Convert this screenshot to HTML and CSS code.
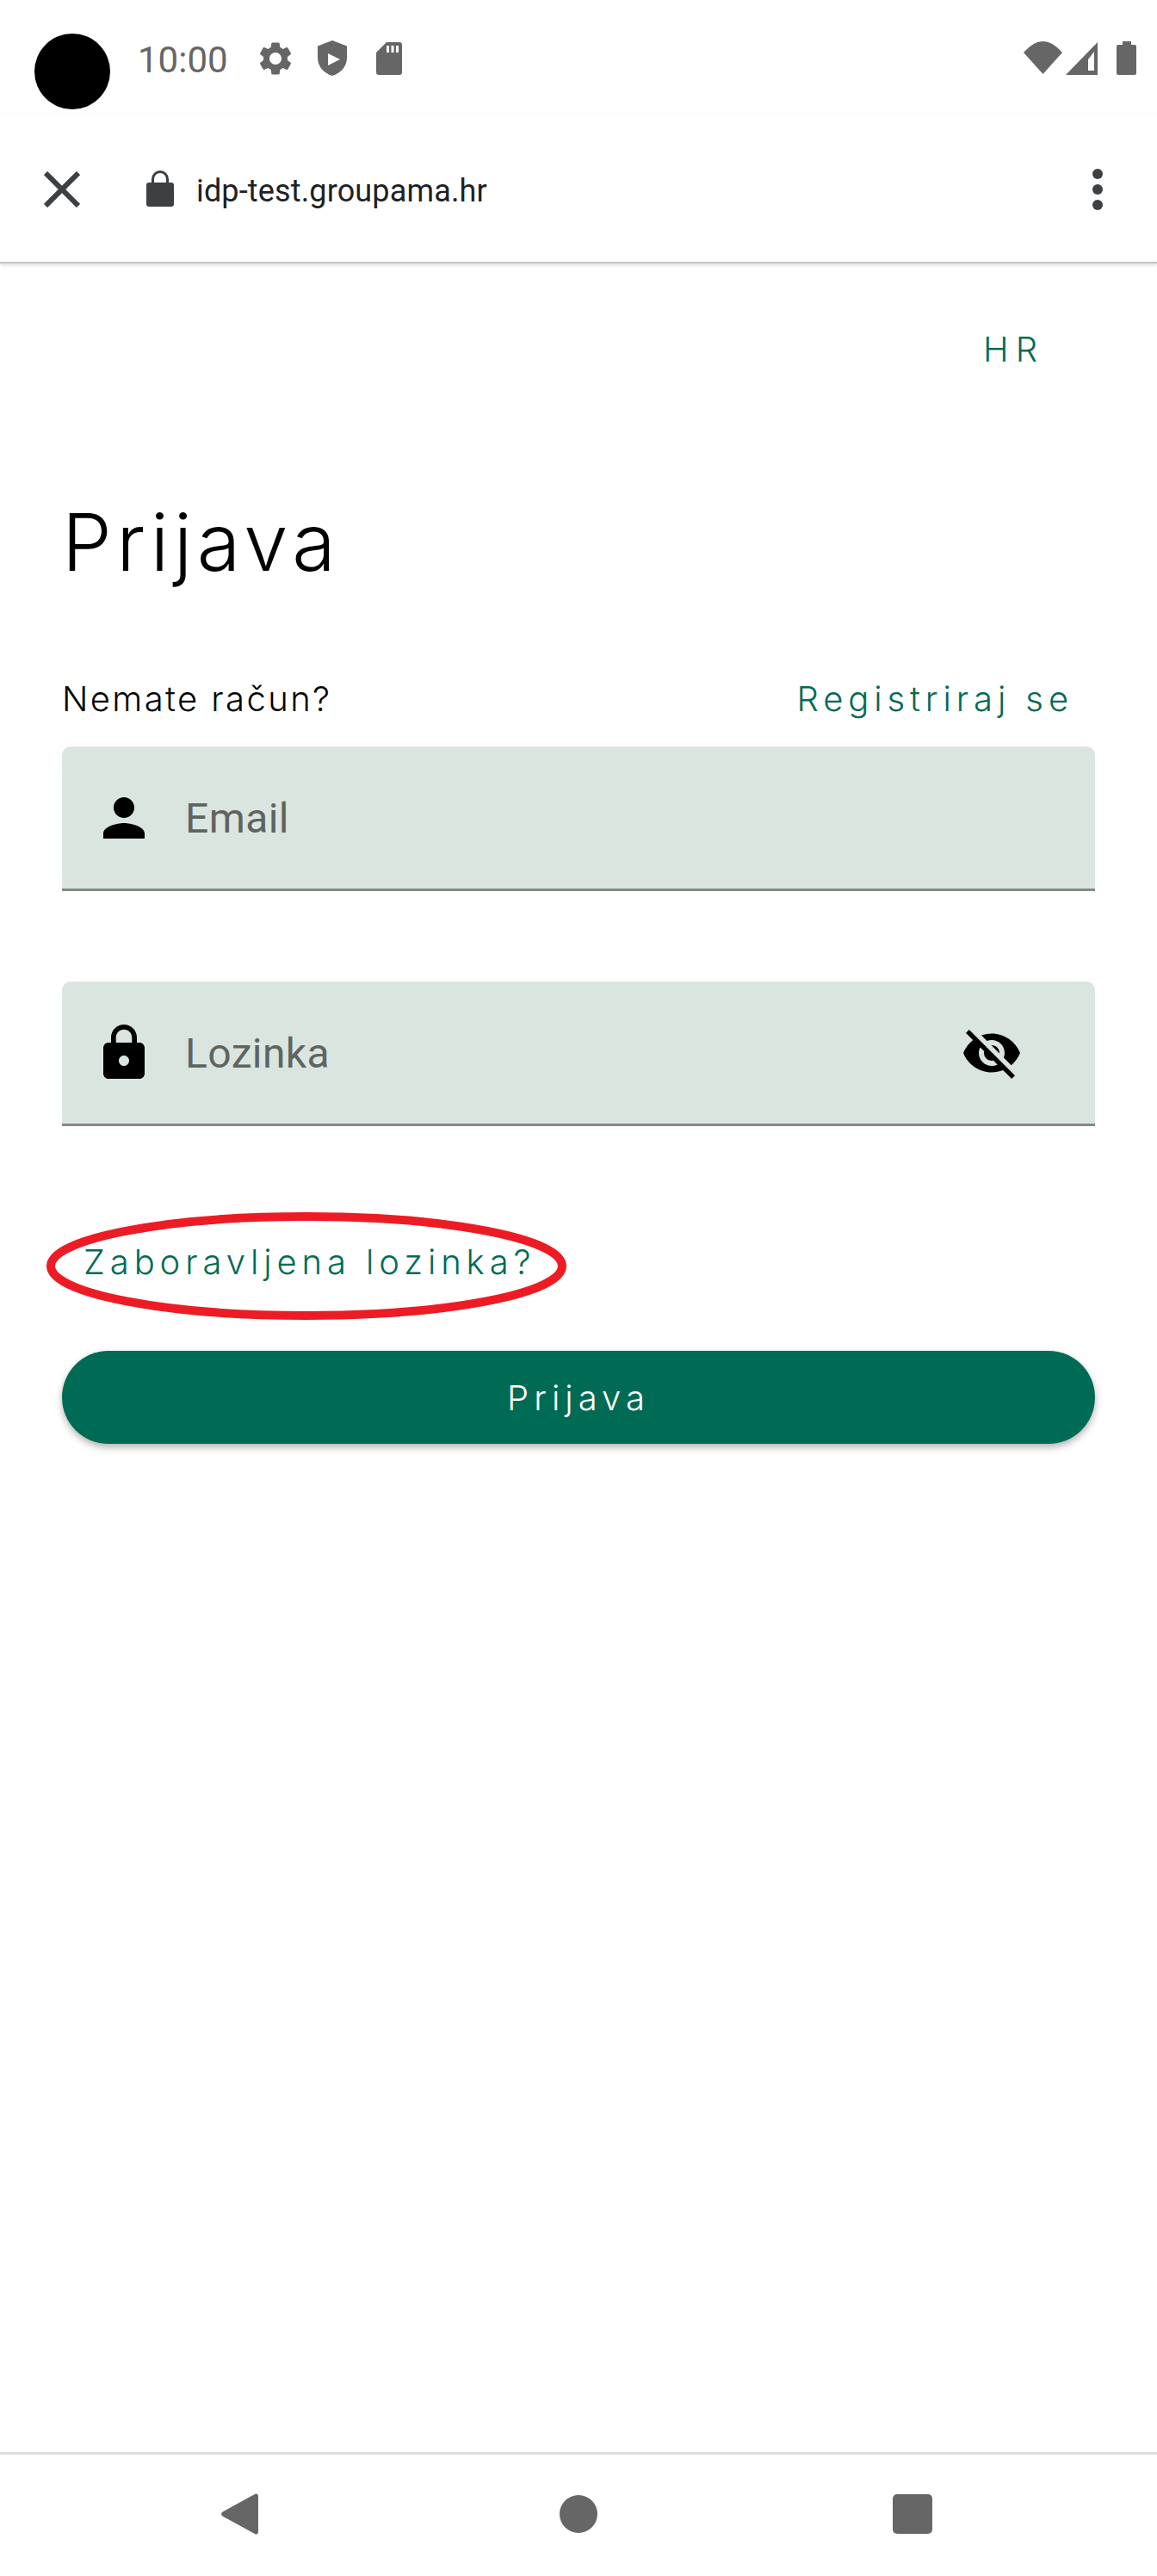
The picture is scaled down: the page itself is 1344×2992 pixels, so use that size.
FILE: index.html
```html
<!DOCTYPE html>
<html lang="hr">
<head>
<meta charset="utf-8">
<title>Prijava</title>
<link rel="stylesheet" href="styles.css">
</head>
<body>
<div class="page">
  <header class="status">
    <div class="status-left">
      <div class="camera"></div>
      <span class="clock">10:00</span>
      <svg class="ic-gear" viewBox="2.4 2.2 19.2 19.6"><path d="M19.14 12.94c.04-.3.06-.61.06-.94 0-.32-.02-.64-.07-.94l2.03-1.58c.18-.14.23-.41.12-.61l-1.92-3.32c-.12-.22-.37-.29-.59-.22l-2.39.96c-.5-.38-1.03-.7-1.62-.94l-.36-2.54c-.04-.24-.24-.41-.48-.41h-3.84c-.24 0-.43.17-.47.41l-.36 2.54c-.59.24-1.13.57-1.62.94l-2.39-.96c-.22-.08-.47 0-.59.22L2.74 8.87c-.12.21-.08.47.12.61l2.03 1.58c-.05.3-.09.63-.09.94s.02.64.07.94l-2.03 1.58c-.18.14-.23.41-.12.61l1.92 3.32c.12.22.37.29.59.22l2.39-.96c.5.38 1.03.7 1.62.94l.36 2.54c.05.24.24.41.48.41h3.84c.24 0 .44-.17.47-.41l.36-2.54c.59-.24 1.13-.56 1.62-.94l2.39.96c.22.08.47 0 .59-.22l1.92-3.32c.12-.22.07-.47-.12-.61l-2.01-1.58zM12 15.6c-1.98 0-3.6-1.62-3.6-3.6s1.62-3.6 3.6-3.6 3.6 1.62 3.6 3.6-1.62 3.6-3.6 3.6z"/></svg>
      <svg class="ic-shield" viewBox="0 0 34 41"><path fill-rule="evenodd" d="M17 0 34 6.500V20C34 30 27 38 17 41 7 38 0 30 0 20V6.500ZM12 15V29L26 22Z"/></svg>
      <svg class="ic-sd" viewBox="0 0 30 38"><path fill-rule="evenodd" d="M12 0H27A3 3 0 0 1 30 3V35A3 3 0 0 1 27 38H3A3 3 0 0 1 0 35V12ZM12 4V12H15V4ZM17.500 4V12H20.500V4ZM23 4V12H26V4Z"/></svg>
    </div>
    <div class="status-right">
      <svg class="ic-wifi" viewBox="0 0 45 38"><path d="M22.500 38 0 13Q22.500-13 45 13Z"/></svg>
      <svg class="ic-signal" viewBox="0 0 37 38"><path fill-rule="evenodd" d="M0 38 37 0V38ZM26 20V33H33V11Z"/></svg>
      <svg class="ic-battery" viewBox="0 0 23 39"><path d="M7 0H17V4H21A2 2 0 0 1 23 6V37A2 2 0 0 1 21 39H2A2 2 0 0 1 0 37V6A2 2 0 0 1 2 4H7Z"/></svg>
    </div>
  </header>

  <div class="toolbar">
    <svg class="ic-close" viewBox="0 0 42 42"><path d="M2 2 40 40M40 2 2 40"/></svg>
    <svg class="ic-urllock" viewBox="0 0 32 42"><path fill-rule="evenodd" d="M6 14V10a10 10 0 0 1 20 0v4h3a3 3 0 0 1 3 3v22a3 3 0 0 1-3 3H3a3 3 0 0 1-3-3V17a3 3 0 0 1 3-3ZM9 14h14V10a7 7 0 0 0-14 0Z"/></svg>
    <span class="url">idp-test.groupama.hr</span>
    <div class="dots"><i></i><i></i><i></i></div>
  </div>

  <main class="content">
    <div class="lang"><a class="link lang-link">HR</a></div>
    <h1 class="title">Prijava</h1>
    <div class="signup">
      <span class="signup-text">Nemate račun?</span>
      <a class="link signup-link">Registriraj se</a>
    </div>
    <div class="field">
      <svg class="field-icon" viewBox="0 0 24 24"><path d="M12 12c2.210 0 4-1.790 4-4s-1.790-4-4-4-4 1.790-4 4 1.790 4 4 4zm0 2c-2.670 0-8 1.340-8 4v2h16v-2c0-2.660-5.330-4-8-4z"/></svg>
      <span class="placeholder">Email</span>
    </div>
    <div class="field field-second">
      <svg class="field-icon" viewBox="0 0 24 24"><path d="M18 8h-1V6c0-2.760-2.240-5-5-5S7 3.240 7 6v2H6c-1.100 0-2 .9-2 2v10c0 1.100.9 2 2 2h12c1.100 0 2-.9 2-2V10c0-1.100-.9-2-2-2zm-6 9c-1.100 0-2-.9-2-2s.9-2 2-2 2 .9 2 2-.9 2-2 2zm3.100-9H8.900V6c0-1.710 1.390-3.100 3.100-3.100 1.710 0 3.100 1.390 3.100 3.100v2z"/></svg>
      <span class="placeholder">Lozinka</span>
      <svg class="field-icon eye" viewBox="0 0 24 24"><path d="M12 7c2.760 0 5 2.240 5 5 0 .65-.13 1.260-.36 1.830l2.920 2.920c1.510-1.260 2.700-2.890 3.430-4.750-1.730-4.390-6-7.500-11-7.500-1.400 0-2.740.25-3.980.7l2.160 2.160C10.740 7.130 11.350 7 12 7zM2 4.270l2.280 2.280.46.46C3.080 8.300 1.780 10.020 1 12c1.730 4.390 6 7.500 11 7.500 1.550 0 3.030-.3 4.380-.84l.42.42L19.730 22 21 20.730 3.270 3 2 4.270zM7.530 9.800l1.550 1.550c-.05.21-.08.43-.08.65 0 1.660 1.340 3 3 3 .22 0 .44-.03.65-.08l1.550 1.550c-.67.33-1.410.53-2.200.53-2.760 0-5-2.240-5-5 0-.79.2-1.530.53-2.200zm4.310-.78l3.150 3.150.02-.16c0-1.660-1.340-3-3-3l-.17.01z"/></svg>
    </div>
    <div class="forgot">
      <a class="link forgot-link">Zaboravljena lozinka?</a>
      <svg class="circle-mark" viewBox="0 0 604 125"><ellipse cx="302" cy="62.500" rx="297" ry="57.500"/></svg>
    </div>
    <button class="submit" type="button">Prijava</button>
  </main>

  <footer class="navbar">
    <svg class="nav-back" viewBox="0 0 43 48"><path d="M38 1.500C40 -.5 43 .5 43 3V45C43 47.500 40 48.500 38 46.500L1.500 26.500C-.5 25 -.5 23 1.500 21.500Z"/></svg>
    <div class="nav-home"></div>
    <div class="nav-recent"></div>
  </footer>
</div>
</body>
</html>
```
FILE: styles.css
```css
* { box-sizing: border-box; }
html, body { margin: 0; padding: 0; background: #fff; }
.page {
  width: 1344px;
  height: 2992px;
  display: flex;
  flex-direction: column;
  font-family: Inter, "Liberation Sans", sans-serif;
}

/* status bar */
.status {
  height: 132px;
  display: flex;
  justify-content: space-between;
  align-items: flex-start;
  padding: 0 24px 0 40px;
}
.status-left, .status-right { display: flex; align-items: flex-start; }
.status svg { fill: #666; display: block; }
.camera { width: 88px; height: 88px; margin-top: 39px; border-radius: 50%; background: #000; }
.clock {
  margin: 46px 2px 0 32px;
  font: 400 42px/48px Roboto, sans-serif;
  color: #666;
  width: 102px;
}
.ic-gear { width: 38px; height: 38px; margin: 49px 0 0 37px; }
.ic-shield { width: 34px; height: 41px; margin: 47px 0 0 30px; }
.ic-sd { width: 30px; height: 38px; margin: 49px 0 0 34px; }
.ic-wifi { width: 45px; height: 38px; margin-top: 48px; }
.ic-signal { width: 37px; height: 38px; margin: 49px 0 0 4px; }
.ic-battery { width: 23px; height: 39px; margin: 48px 0 0 22px; }

/* browser toolbar */
.toolbar {
  height: 174px;
  display: flex;
  align-items: flex-start;
  padding-left: 51px;
  border-bottom: 2px solid #c4c4c4;
  box-shadow: 0 2px 4px rgba(0, 0, 0, .14);
}
.ic-close { width: 42px; height: 42px; margin-top: 67px; fill: none; stroke: #3c4043; stroke-width: 6; display: block; }
.ic-urllock { width: 32px; height: 42px; margin: 66px 0 0 77px; fill: #3c4043; display: block; }
.url {
  margin: 66px 0 0 26px;
  font: 400 36px/48px Roboto, sans-serif;
  letter-spacing: .15px;
  color: #202124;
  flex: 1;
}
.dots { display: flex; flex-direction: column; gap: 6px; margin: 64px 63px 0 0; }
.dots i { width: 12px; height: 12px; border-radius: 50%; background: #3c4043; display: block; }

/* page content */
.content { flex: 1; padding: 0 72px; }
.link { color: #006b54; font-weight: 300; font-size: 40px; line-height: 50px; }
.lang { margin-top: 70px; height: 60px; display: flex; justify-content: flex-end; align-items: center; padding-right: 59px; }
.lang-link { letter-spacing: 8px; }
.title { margin: 134px 0 0; font-size: 92px; font-weight: 300; line-height: 120px; letter-spacing: 5.500px; color: #000; }
.signup { margin-top: 97px; display: flex; justify-content: space-between; height: 50px; padding-right: 25px; align-items: center; }
.signup-text { font-size: 40px; font-weight: 300; line-height: 50px; letter-spacing: 2.400px; color: #000; }
.signup-link { letter-spacing: 5.900px; }
.field {
  margin-top: 30px;
  height: 168px;
  display: flex;
  align-items: center;
  padding-left: 36px;
  background: #dbe5df;
  border-bottom: 3px solid #838a85;
  border-radius: 10px 10px 0 0;
}
.field-second { margin-top: 105px; }
.field-icon { width: 72px; height: 72px; fill: #000; flex: none; display: block; }
.placeholder { margin: 2px 0 0 35px; font: 400 48px/56px Roboto, sans-serif; letter-spacing: .4px; color: #5f6461; flex: 1; }
.eye { margin-right: 84px; }
.forgot { position: relative; margin-top: 133px; height: 50px; padding-left: 25px; }
.forgot-link { letter-spacing: 5.900px; white-space: nowrap; }
.circle-mark { position: absolute; left: -18px; top: -33px; width: 604px; height: 125px; fill: none; stroke: #ed1c24; stroke-width: 10; }
.submit {
  display: block;
  width: 100%;
  height: 108px;
  margin-top: 78px;
  border: 0;
  border-radius: 54px;
  background: #006b54;
  color: #fff;
  font-family: inherit;
  font-size: 40px;
  font-weight: 300;
  letter-spacing: 6px;
  box-shadow: 0 4px 8px rgba(0, 0, 0, .3);
}

/* navigation bar */
.navbar {
  height: 144px;
  border-top: 3px solid #dedede;
  display: flex;
  align-items: flex-start;
}
.nav-back { width: 43px; height: 48px; margin: 45px 0 0 257px; fill: #666; display: block; }
.nav-home { width: 44px; height: 44px; margin: 47px 0 0 350px; border-radius: 50%; background: #666; }
.nav-recent { width: 46px; height: 46px; margin: 46px 0 0 343px; border-radius: 5px; background: #666; }
```
